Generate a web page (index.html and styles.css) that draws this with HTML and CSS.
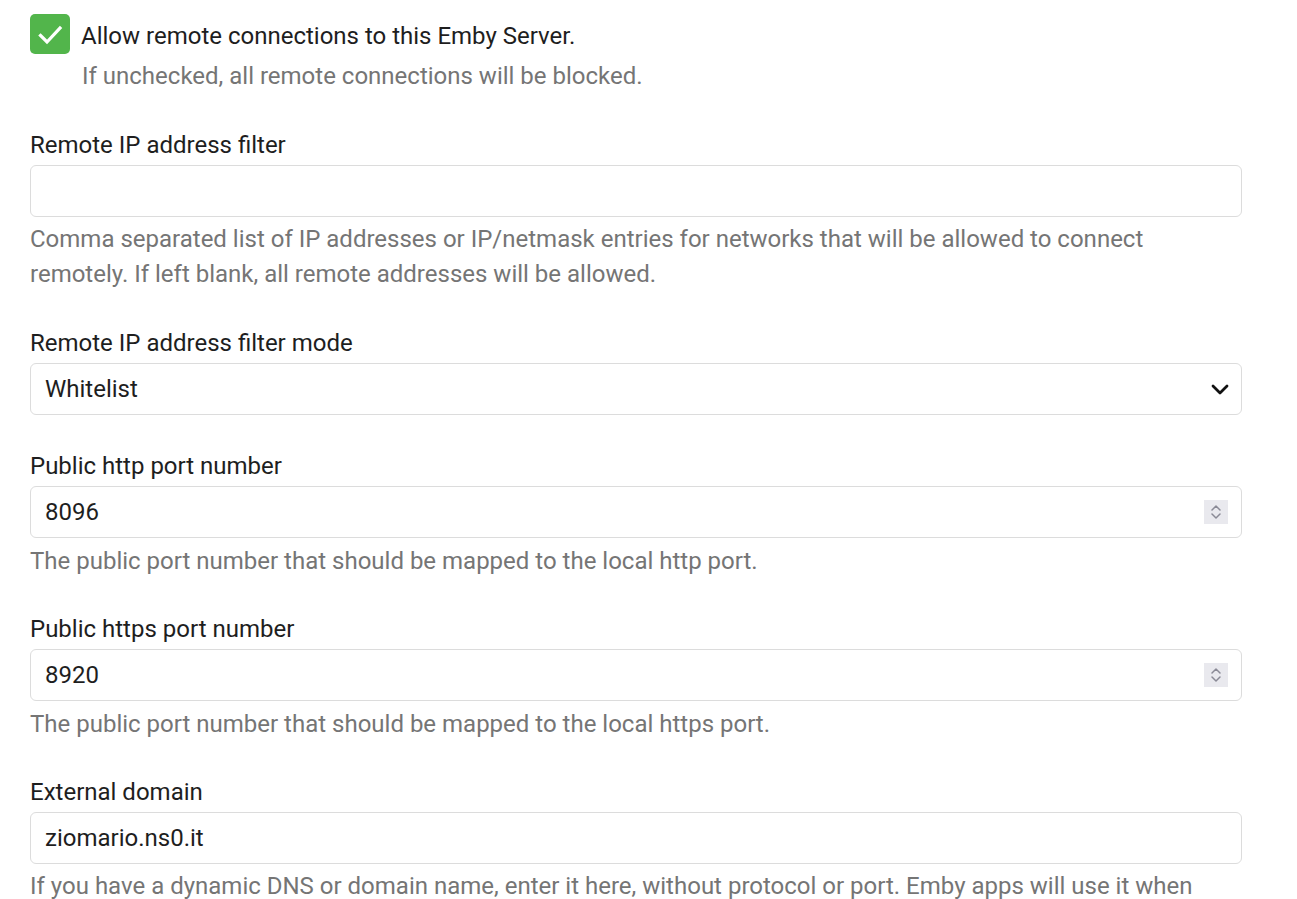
FILE: index.html
```html
<!DOCTYPE html>
<html>
<head>
<meta charset="utf-8">
<link rel="stylesheet" href="styles.css">
</head>
<body>
<div class="page">
  <div class="check-field">
    <div class="check-row">
      <span class="checkbox">
        <svg viewBox="0 0 40 40" width="40" height="40"><path d="M10.5 21.5 L17 28 L30 14" fill="none" stroke="#fff" stroke-width="3.2" stroke-linecap="square"/></svg>
      </span>
      <span class="check-label">Allow remote connections to this Emby Server.</span>
    </div>
    <div class="check-desc">If unchecked, all remote connections will be blocked.</div>
  </div>

  <div class="field">
    <div class="label">Remote IP address filter</div>
    <div class="input"></div>
    <div class="help">Comma separated list of IP addresses or IP/netmask entries for networks that will be allowed to connect remotely. If left blank, all remote addresses will be allowed.</div>
  </div>

  <div class="field">
    <div class="label">Remote IP address filter mode</div>
    <div class="input select">
      <span>Whitelist</span>
      <svg class="chev" viewBox="0 0 20 20" width="20" height="20"><path d="M3 7 L10 14 L17 7" fill="none" stroke="#111" stroke-width="2.8" stroke-linecap="round" stroke-linejoin="round"/></svg>
    </div>
  </div>

  <div class="field num-field">
    <div class="label">Public http port number</div>
    <div class="input number">
      <span>8096</span>
      <span class="spin"><svg viewBox="0 0 24 24" width="24" height="24"><path d="M8 10 L12 6 L16 10 M8 14 L12 18 L16 14" fill="none" stroke="#8a8a96" stroke-width="1.5" stroke-linecap="round" stroke-linejoin="round"/></svg></span>
    </div>
    <div class="help">The public port number that should be mapped to the local http port.</div>
  </div>

  <div class="field num-field">
    <div class="label">Public https port number</div>
    <div class="input number">
      <span>8920</span>
      <span class="spin"><svg viewBox="0 0 24 24" width="24" height="24"><path d="M8 10 L12 6 L16 10 M8 14 L12 18 L16 14" fill="none" stroke="#8a8a96" stroke-width="1.5" stroke-linecap="round" stroke-linejoin="round"/></svg></span>
    </div>
    <div class="help">The public port number that should be mapped to the local https port.</div>
  </div>

  <div class="field">
    <div class="label">External domain</div>
    <div class="input"><span>ziomario.ns0.it</span></div>
    <div class="help">If you have a dynamic DNS or domain name, enter it here, without protocol or port. Emby apps will use it when connecting remotely.</div>
  </div>
</div>
</body>
</html>
```

FILE: styles.css
```css
html, body {
  margin: 0;
  padding: 0;
  background: #ffffff;
}
body {
  font-family: Roboto, "Noto Sans", sans-serif;
  font-size: 24px;
  line-height: 35px;
  color: #1e1e1e;
}
.page {
  padding: 14px 0 0 30px;
  width: 1212px;
}
.check-field {
  margin-bottom: 34px;
}
.check-row {
  display: flex;
  align-items: center;
  gap: 11px;
}
.checkbox {
  width: 40px;
  height: 40px;
  border-radius: 5px;
  background: #52b54b;
  display: flex;
  flex: none;
}
.check-label {
  color: #1e1e1e;
  position: relative;
  top: 2px;
}
.check-desc {
  color: #757575;
  padding-left: 52px;
  margin-top: 5px;
}
.field {
  margin-bottom: 34px;
}
.num-field {
  margin-bottom: 33px;
}
.label {
  margin-bottom: 2px;
}
.input {
  box-sizing: border-box;
  height: 52px;
  border: 1px solid #dcdcdc;
  border-radius: 6px;
  padding: 0 13px 0 14px;
  display: flex;
  align-items: center;
  justify-content: space-between;
  color: #1e1e1e;
}
.select {
  padding-right: 11px;
}
.spin {
  width: 24px;
  height: 24px;
  background: #e9e9ee;
  display: flex;
}
.help {
  color: #757575;
  margin-top: 5px;
}
.num-field .help {
  margin-top: 6px;
}
```
